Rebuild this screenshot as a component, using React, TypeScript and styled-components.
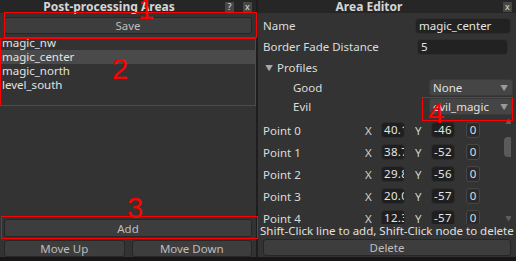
import React from "react";
import styled, { createGlobalStyle } from "styled-components";

const GlobalStyle = createGlobalStyle`
  body {
    margin: 0;
    background: #1a1518;
    font-family: "Noto Sans", "Inter", sans-serif;
    font-size: 11.5px;
    color: #dcdcdc;
  }
`;

const Window = styled.div`
  position: relative;
  width: 516px;
  height: 261px;
  display: flex;
  background: #1a1518;
  overflow: hidden;
`;

const Panel = styled.div<{ $width: number }>`
  width: ${(p) => p.$width}px;
  height: 257px;
  display: flex;
  flex-direction: column;
  background: #333333;
`;

const Divider = styled.div`
  width: 2px;
  height: 257px;
  background: #1e1e1e;
`;

const TitleBar = styled.div<{ $padRight: number }>`
  height: 13px;
  flex: none;
  background: #262626;
  position: relative;
  display: flex;
  align-items: center;
  justify-content: center;
  padding-right: ${(p) => p.$padRight}px;
`;

const Title = styled.div`
  font-weight: bold;
  font-size: 12px;
  color: #d6d6d6;
  line-height: 13px;
  white-space: nowrap;
`;

const TitleButtons = styled.div`
  position: absolute;
  right: 4px;
  top: 2px;
  display: flex;
  gap: 9px;
`;

const TitleButton = styled.div`
  width: 9px;
  height: 10px;
  background: #474747;
  color: #e0e0e0;
  font-size: 9px;
  line-height: 10px;
  text-align: center;
`;

const Button = styled.div<{ $h?: number }>`
  height: ${(p) => p.$h ?? 17}px;
  flex: 1;
  box-sizing: border-box;
  background: #3d3d3d;
  border: 1px solid #262626;
  border-radius: 3px;
  color: #bdbdbd;
  display: flex;
  align-items: center;
  justify-content: center;
`;

const LeftBody = styled.div`
  flex: 1;
  display: flex;
  flex-direction: column;
  padding: 4px 4px 0 4px;
`;

const ButtonRow = styled.div<{ $mt?: number }>`
  display: flex;
  gap: 7px;
  margin-top: ${(p) => p.$mt ?? 0}px;
`;

const List = styled.div`
  margin: 2px -4px 0 -4px;
  width: 255px;
  flex: 1;
`;

const ListItem = styled.div<{ $selected?: boolean }>`
  height: 14px;
  line-height: 14px;
  padding-left: 2px;
  color: #e2e2e2;
  background: ${(p) => (p.$selected ? "#4a4a4a" : "transparent")};
`;

const RightBody = styled.div`
  flex: 1;
  display: flex;
  flex-direction: column;
  padding: 2px 5px 0 5px;
`;

const FieldRow = styled.div<{ $h: number; $indent?: number }>`
  height: ${(p) => p.$h}px;
  display: flex;
  align-items: center;
  padding-left: ${(p) => p.$indent ?? 0}px;
`;

const Label = styled.div`
  flex: 1;
  color: #dcdcdc;
`;

const TextInput = styled.div<{ $w: number; $mr?: number }>`
  width: ${(p) => p.$w}px;
  margin-right: ${(p) => p.$mr ?? 0}px;
  height: 16px;
  box-sizing: border-box;
  background: #222222;
  border: 1px solid #2e2e2e;
  border-radius: 4px;
  padding-left: 3px;
  line-height: 14px;
  color: #e4e4e4;
  overflow: hidden;
  white-space: nowrap;
`;

const Select = styled.div`
  width: 84px;
  height: 17px;
  margin-right: -2px;
  box-sizing: border-box;
  background: #454545;
  border: 1px solid #3a3a3a;
  border-radius: 3px;
  padding: 0 4px 0 3px;
  display: flex;
  align-items: center;
  justify-content: space-between;
  color: #e0e0e0;
`;

const Caret = styled.span`
  font-size: 8px;
  color: #9a9a9a;
`;

const Disclosure = styled.span`
  font-size: 8px;
  color: #a8a8a8;
  margin: 0 4px 0 2px;
`;

const PointsArea = styled.div`
  height: 108px;
  display: flex;
  overflow: hidden;
`;

const PointsList = styled.div`
  flex: 1;
  padding-top: 3px;
`;

const PointRow = styled.div`
  height: 22px;
  display: flex;
  align-items: center;
`;

const PointName = styled.div`
  width: 102px;
`;

const Axis = styled.div<{ $w: number }>`
  width: ${(p) => p.$w}px;
  color: #cfcfcf;
`;

const NumBox = styled.div<{ $mr: number }>`
  width: 24px;
  margin-right: ${(p) => p.$mr}px;
  height: 16px;
  box-sizing: border-box;
  background: #1f1f1f;
  border: 1px solid #2c2c2c;
  border-radius: 4px;
  padding-left: 2px;
  line-height: 14px;
  letter-spacing: 0.3px;
  color: #e6e6e6;
  overflow: hidden;
  white-space: nowrap;
`;

const ZeroBox = styled.div`
  width: 14px;
  height: 16px;
  box-sizing: border-box;
  background: #2b2b2b;
  border: 1px solid #474747;
  border-radius: 3px;
  text-align: center;
  line-height: 14px;
  color: #dedede;
`;

const ScrollBar = styled.div`
  width: 11px;
  margin-right: -3px;
  display: flex;
  flex-direction: column;
  align-items: center;
  color: #5e5e5e;
  font-size: 7px;
  line-height: 8px;
  padding-top: 2px;
`;

const Thumb = styled.div`
  width: 9px;
  height: 20px;
  margin: 11px 0 auto 0;
  border-radius: 4px;
  background: #5a5a5a;
`;

const Hint = styled.div`
  height: 13px;
  line-height: 13px;
  margin-left: -3px;
  white-space: nowrap;
  color: #e0e0e0;
`;

const Annotation = styled.div`
  position: absolute;
  border: 1.5px solid #ff0000;
  box-sizing: border-box;
  pointer-events: none;
`;

const AnnotationNumber = styled.div`
  position: absolute;
  color: #ff0000;
  font-family: "Liberation Sans", sans-serif;
  font-size: 29px;
  line-height: 29px;
  pointer-events: none;
`;

const points = [
  { name: "Point 0", x: "40.1", y: "-46" },
  { name: "Point 1", x: "38.7", y: "-52" },
  { name: "Point 2", x: "29.8", y: "-56" },
  { name: "Point 3", x: "20.0", y: "-57" },
  { name: "Point 4", x: "12.3", y: "-57" },
];

const areas = ["magic_nw", "magic_center", "magic_north", "level_south"];

const boxes = [
  { l: 4, t: 12, w: 253, h: 26 },
  { l: 0, t: 38, w: 256, h: 68 },
  { l: 1, t: 216, w: 257, h: 23 },
  { l: 422, t: 97, w: 91, h: 24 },
];

const labels = [
  { n: "1", l: 138, t: -5 },
  { n: "2", l: 112, t: 55 },
  { n: "3", l: 127, t: 194 },
  { n: "4", l: 428, t: 99 },
];

const App = () => {
  return (
    <>
      <GlobalStyle />
      <Window>
        <Panel $width={256}>
          <TitleBar $padRight={38}>
            <Title>Post-processing Areas</Title>
            <TitleButtons>
              <TitleButton>?</TitleButton>
              <TitleButton>x</TitleButton>
            </TitleButtons>
          </TitleBar>
          <LeftBody>
            <ButtonRow>
              <Button>Save</Button>
            </ButtonRow>
            <List>
              {areas.map((a) => (
                <ListItem key={a} $selected={a === "magic_center"}>
                  {a}
                </ListItem>
              ))}
            </List>
            <ButtonRow>
              <Button $h={18}>Add</Button>
            </ButtonRow>
            <ButtonRow $mt={3}>
              <Button>Move Up</Button>
              <Button>Move Down</Button>
            </ButtonRow>
          </LeftBody>
        </Panel>
        <Divider />
        <Panel $width={258}>
          <TitleBar $padRight={36}>
            <Title>Area Editor</Title>
            <TitleButtons>
              <TitleButton>x</TitleButton>
            </TitleButtons>
          </TitleBar>
          <RightBody>
            <FieldRow $h={21}>
              <Label>Name</Label>
              <TextInput $w={96}>magic_center</TextInput>
            </FieldRow>
            <FieldRow $h={21}>
              <Label>Border Fade Distance</Label>
              <TextInput $w={91} $mr={3}>5</TextInput>
            </FieldRow>
            <FieldRow $h={20}>
              <Disclosure>▼</Disclosure>
              <Label>Profiles</Label>
            </FieldRow>
            <FieldRow $h={20} $indent={30}>
              <Label>Good</Label>
              <Select>
                None<Caret>▼</Caret>
              </Select>
            </FieldRow>
            <FieldRow $h={19} $indent={30}>
              <Label>Evil</Label>
              <Select>
                evil_magic<Caret>▼</Caret>
              </Select>
            </FieldRow>
            <PointsArea>
              <PointsList>
                {points.map((p) => (
                  <PointRow key={p.name}>
                    <PointName>{p.name}</PointName>
                    <Axis $w={16}>X</Axis>
                    <NumBox $mr={10}>{p.x}</NumBox>
                    <Axis $w={16}>Y</Axis>
                    <NumBox $mr={11}>{p.y}</NumBox>
                    <ZeroBox>0</ZeroBox>
                  </PointRow>
                ))}
              </PointsList>
              <ScrollBar>
                <span>▲</span>
                <Thumb />
                <span>▼</span>
              </ScrollBar>
            </PointsArea>
            <Hint>Shift-Click line to add, Shift-Click node to delete</Hint>
            <ButtonRow $mt={2}>
              <Button>Delete</Button>
            </ButtonRow>
          </RightBody>
        </Panel>
        {boxes.map((b, i) => (
          <Annotation
            key={i}
            style={{ left: b.l, top: b.t, width: b.w, height: b.h }}
          />
        ))}
        {labels.map((n) => (
          <AnnotationNumber key={n.n} style={{ left: n.l, top: n.t }}>
            {n.n}
          </AnnotationNumber>
        ))}
      </Window>
    </>
  );
};

export default App;
